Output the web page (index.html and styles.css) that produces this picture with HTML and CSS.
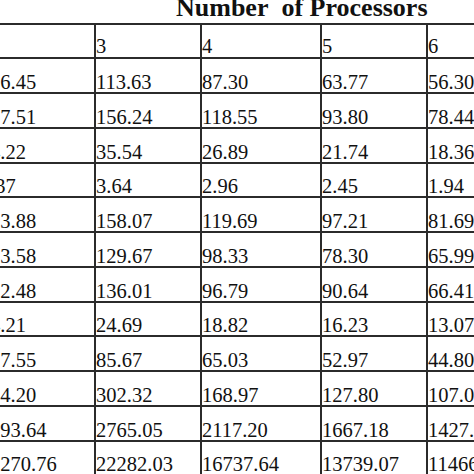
FILE: index.html
```html
<!DOCTYPE html>
<html>
<head>
<meta charset="utf-8">
<link rel="stylesheet" href="styles.css">
</head>
<body>
<div class="page">
  <div class="title">Number&nbsp; of Processors</div>
  <div class="grid">
    <div class="cell head"></div><div class="cell head">3</div><div class="cell head">4</div><div class="cell head">5</div><div class="cell head">6</div>
    <div class="cell">16.45</div><div class="cell">113.63</div><div class="cell">87.30</div><div class="cell">63.77</div><div class="cell">56.30</div>
    <div class="cell">17.51</div><div class="cell">156.24</div><div class="cell">118.55</div><div class="cell">93.80</div><div class="cell">78.44</div>
    <div class="cell">4.22</div><div class="cell">35.54</div><div class="cell">26.89</div><div class="cell">21.74</div><div class="cell">18.36</div>
    <div class="cell">.37</div><div class="cell">3.64</div><div class="cell">2.96</div><div class="cell">2.45</div><div class="cell">1.94</div>
    <div class="cell">13.88</div><div class="cell">158.07</div><div class="cell">119.69</div><div class="cell">97.21</div><div class="cell">81.69</div>
    <div class="cell">13.58</div><div class="cell">129.67</div><div class="cell">98.33</div><div class="cell">78.30</div><div class="cell">65.99</div>
    <div class="cell">12.48</div><div class="cell">136.01</div><div class="cell">96.79</div><div class="cell">90.64</div><div class="cell">66.41</div>
    <div class="cell">4.21</div><div class="cell">24.69</div><div class="cell">18.82</div><div class="cell">16.23</div><div class="cell">13.07</div>
    <div class="cell">17.55</div><div class="cell">85.67</div><div class="cell">65.03</div><div class="cell">52.97</div><div class="cell">44.80</div>
    <div class="cell">14.20</div><div class="cell">302.32</div><div class="cell">168.97</div><div class="cell">127.80</div><div class="cell">107.06</div>
    <div class="cell">193.64</div><div class="cell">2765.05</div><div class="cell">2117.20</div><div class="cell">1667.18</div><div class="cell">1427.52</div>
    <div class="cell">1270.76</div><div class="cell">22282.03</div><div class="cell">16737.64</div><div class="cell">13739.07</div><div class="cell">11466.40</div>
  </div>
</div>
</body>
</html>
```
FILE: styles.css
```css
html, body {
  margin: 0;
  padding: 0;
  background: #ffffff;
  overflow: hidden;
}
.page {
  width: 474px;
  height: 474px;
  overflow: hidden;
  font-family: "Liberation Serif", "Times New Roman", serif;
  color: #111111;
}
.title {
  margin-left: 176px;
  font-size: 26px;
  font-weight: bold;
  line-height: 16px;
  height: 16px;
  margin-bottom: 7px;
  white-space: nowrap;
}
.grid {
  display: grid;
  grid-template-columns: 106px 106px 120px 106px 106px;
  grid-template-rows: 34.3px repeat(12, 34.75px);
  width: 544px;
  margin-left: -10px;
  border-top: 2px solid #2b2b2b;
}
.cell {
  box-sizing: border-box;
  border-right: 2px solid #2b2b2b;
  border-bottom: 2px solid #2b2b2b;
  display: flex;
  align-items: flex-end;
  font-size: 20.5px;
  line-height: 18px;
  padding: 0 0 1px 0;
  white-space: nowrap;
  overflow: hidden;
}
.head {
  padding-bottom: 2px;
}
```
